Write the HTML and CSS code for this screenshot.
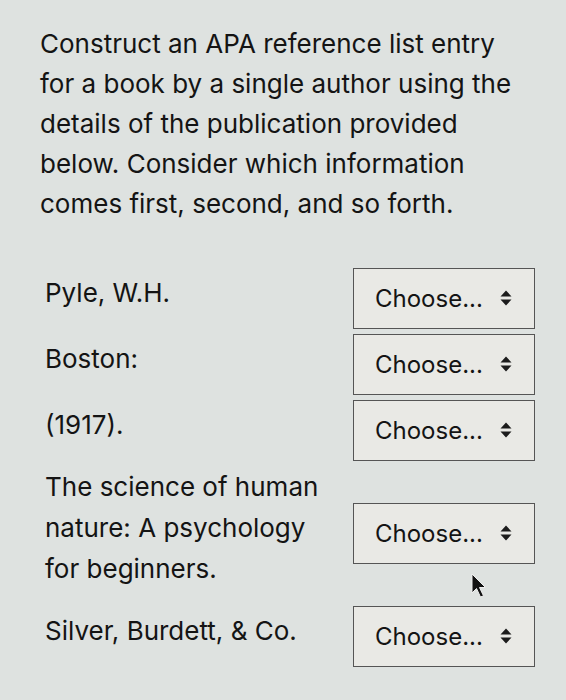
FILE: index.html
```html
<!DOCTYPE html>
<html lang="en">
<head>
    <meta charset="UTF-8">
    <meta name="viewport" content="width=device-width, initial-scale=1.0">
    <title>APA Reference Matching</title>
    <link rel="stylesheet" href="styles.css">
</head>
<body>
    <div class="question">
        <p class="prompt">Construct an APA reference list entry for a book by a single author using the details of the publication provided below. Consider which information comes first, second, and so forth.</p>

        <div class="match">
            <div class="row">
                <div class="label">Pyle, W.H.</div>
                <div class="choice">
                    <select><option>Choose...</option><option>1</option><option>2</option><option>3</option><option>4</option><option>5</option></select>
                    <svg class="arrows" width="12" height="16" viewBox="0 0 12 16"><path d="M6 0.5 L11.5 6.5 L0.5 6.5 Z M6 15.5 L11.5 9.5 L0.5 9.5 Z" fill="#1c1c1c"/></svg>
                </div>
            </div>
            <div class="row">
                <div class="label">Boston:</div>
                <div class="choice">
                    <select><option>Choose...</option><option>1</option><option>2</option><option>3</option><option>4</option><option>5</option></select>
                    <svg class="arrows" width="12" height="16" viewBox="0 0 12 16"><path d="M6 0.5 L11.5 6.5 L0.5 6.5 Z M6 15.5 L11.5 9.5 L0.5 9.5 Z" fill="#1c1c1c"/></svg>
                </div>
            </div>
            <div class="row">
                <div class="label">(1917).</div>
                <div class="choice">
                    <select><option>Choose...</option><option>1</option><option>2</option><option>3</option><option>4</option><option>5</option></select>
                    <svg class="arrows" width="12" height="16" viewBox="0 0 12 16"><path d="M6 0.5 L11.5 6.5 L0.5 6.5 Z M6 15.5 L11.5 9.5 L0.5 9.5 Z" fill="#1c1c1c"/></svg>
                </div>
            </div>
            <div class="row">
                <div class="label">The science of human nature: A psychology for beginners.</div>
                <div class="choice">
                    <select><option>Choose...</option><option>1</option><option>2</option><option>3</option><option>4</option><option>5</option></select>
                    <svg class="arrows" width="12" height="16" viewBox="0 0 12 16"><path d="M6 0.5 L11.5 6.5 L0.5 6.5 Z M6 15.5 L11.5 9.5 L0.5 9.5 Z" fill="#1c1c1c"/></svg>
                    <svg class="cursor" width="18" height="26" viewBox="0 0 18 26"><path d="M1 1 L1 20 L5.5 15.5 L9.5 24 L12.5 22.8 L8.5 14.5 L14.5 14.5 Z" fill="#111" stroke="#eeeeee" stroke-width="1"/></svg>
                </div>
            </div>
            <div class="row">
                <div class="label">Silver, Burdett, &amp; Co.</div>
                <div class="choice">
                    <select><option>Choose...</option><option>1</option><option>2</option><option>3</option><option>4</option><option>5</option></select>
                    <svg class="arrows" width="12" height="16" viewBox="0 0 12 16"><path d="M6 0.5 L11.5 6.5 L0.5 6.5 Z M6 15.5 L11.5 9.5 L0.5 9.5 Z" fill="#1c1c1c"/></svg>
                </div>
            </div>
        </div>
    </div>
</body>
</html>
```

FILE: styles.css
```css
body {
    margin: 0;
    background-color: #dee2e0;
    font-family: Inter, "Noto Sans", sans-serif;
    color: #141414;
}
.question {
    padding: 24px 10px 20px 40px;
}
.prompt {
    margin: 0 0 44px 0;
    width: 482px;
    font-size: 26px;
    line-height: 40px;
}
.match {
    padding-left: 5px;
}
.row {
    display: flex;
    align-items: center;
    margin-bottom: 5px;
}
.label {
    width: 282px;
    margin-right: 26px;
    margin-bottom: 12px;
    font-size: 26px;
    line-height: 41px;
}
.choice {
    position: relative;
}
select {
    appearance: none;
    -webkit-appearance: none;
    width: 182px;
    height: 61px;
    padding: 0 0 0 21px;
    border: 1.5px solid #555;
    border-radius: 0;
    background-color: #e9e9e5;
    font-family: Inter, "Noto Sans", sans-serif;
    font-size: 24px;
    color: #141414;
}
.arrows {
    position: absolute;
    top: 22px;
    left: 147px;
    pointer-events: none;
}
.cursor {
    position: absolute;
    top: 70px;
    left: 118px;
}
```
